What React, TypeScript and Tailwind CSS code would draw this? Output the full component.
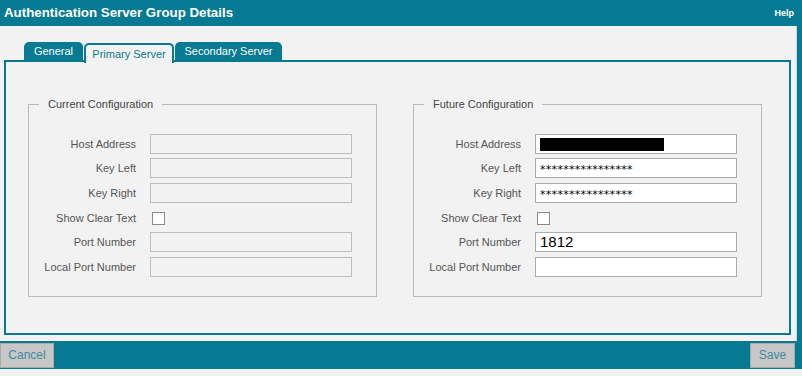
import React from "react";

const TEAL = "bg-[#067a92]";

function Row({ label, children, cls }: { label: string; children: React.ReactNode; cls?: string }) {
  return (
    <div className={"flex items-center " + (cls || "")}>
      <div className="w-[107px] text-right text-[11px] text-[#555] leading-[13px] pr-0">{label}</div>
      <div className="ml-[14px] flex items-center">{children}</div>
    </div>
  );
}

function Input({ future, children }: { future?: boolean; children?: React.ReactNode }) {
  return (
    <div
      className={
        "w-[202px] h-[20px] border flex items-center pl-[4px] " +
        (future ? "bg-white border-[#ababab]" : "bg-[#f2f2f2] border-[#bdbdbd]")
      }
    >
      {children}
    </div>
  );
}

function Fieldset({ title, future }: { title: string; future?: boolean }) {
  const stars = "****************";
  return (
    <fieldset className="w-[349px] h-[199px] border border-[#b8b8b8] px-0 pt-[23px] m-0">
      <legend className="ml-[10px] px-[9px] text-[11px] leading-[13px] text-[#444]">{title}</legend>
      <Row label="Host Address" cls="h-[20px]">
        <Input future={future}>
          {future ? <div className="w-[124px] h-[13px] bg-black" /> : null}
        </Input>
      </Row>
      <Row label="Key Left" cls="h-[20px] mt-[4px]">
        <Input future={future}>
          {future ? <span className="text-[11px] text-black leading-[12px] pt-[3px] tracking-[0.3px]" style={{ fontFamily: "'DejaVu Sans', sans-serif" }}>{stars}</span> : null}
        </Input>
      </Row>
      <Row label="Key Right" cls="h-[20px] mt-[5px]">
        <Input future={future}>
          {future ? <span className="text-[11px] text-black leading-[12px] pt-[3px] tracking-[0.3px]" style={{ fontFamily: "'DejaVu Sans', sans-serif" }}>{stars}</span> : null}
        </Input>
      </Row>
      <Row label="Show Clear Text" cls="h-[20px] mt-[5px]">
        <div className="ml-[2px] mt-[1px] w-[13px] h-[13px] bg-white border border-[#8a8a8a]" />
      </Row>
      <Row label="Port Number" cls="h-[20px] mt-[4px]">
        <Input future={future}>
          {future ? <span className="text-[15px] text-black leading-[16px]">1812</span> : null}
        </Input>
      </Row>
      <Row label="Local Port Number" cls="h-[20px] mt-[5px]">
        <Input future={future} />
      </Row>
    </fieldset>
  );
}

export default function App() {
  return (
    <div
      className={"w-[802px] h-[376px] flex flex-col overflow-hidden " + TEAL}
      style={{ fontFamily: "'Liberation Sans', Arial, sans-serif" }}
    >
      <div className="h-[26px] flex items-center justify-between pl-[4px] pr-[8px] shrink-0">
        <span className="text-white font-bold text-[13.3px] leading-[16px]">Authentication Server Group Details</span>
        <span className="text-white font-bold text-[9px] leading-[10px]">Help</span>
      </div>
      <div className="h-[315px] w-[797px] bg-[#f2f2f2] border-r border-[#cfd8da] pt-[16px] shrink-0">
        <div className="flex ml-[24px] h-[19px] items-end relative z-10">
          <div className={"w-[59px] h-[19px] rounded-t-[5px] flex items-center justify-center text-white text-[11px] " + TEAL}>
            General
          </div>
          <div className="ml-[1px] w-[90px] h-[20px] -mb-[2px] rounded-t-[5px] border-2 border-b-0 border-[#067a92] bg-[#f2f2f2] flex items-center justify-center text-[#067a92] text-[11px]">
            Primary Server
          </div>
          <div className={"ml-[1px] w-[107px] h-[19px] rounded-t-[5px] flex items-center justify-center text-white text-[11px] " + TEAL}>
            Secondary Server
          </div>
        </div>
        <div className="ml-[4px] w-[787px] h-[275px] border-2 border-[#067a92] -mt-[1px] pl-[22px] pt-[36px] flex gap-[36px]">
          <Fieldset title="Current Configuration" />
          <Fieldset title="Future Configuration" future />
        </div>
      </div>
      <div className="h-[28px] flex items-center justify-between shrink-0">
        <button className="w-[54px] h-[25px] bg-[#c7c7c7] border border-[#a9a9a9] text-[#3d8aa0] text-[12px]">Cancel</button>
        <button className="mr-[7px] w-[45px] h-[25px] bg-[#c7c7c7] border border-[#a9a9a9] text-[#3d8aa0] text-[12px]">Save</button>
      </div>
      <div className="flex-1 bg-[#f2f2f2]" />
    </div>
  );
}
